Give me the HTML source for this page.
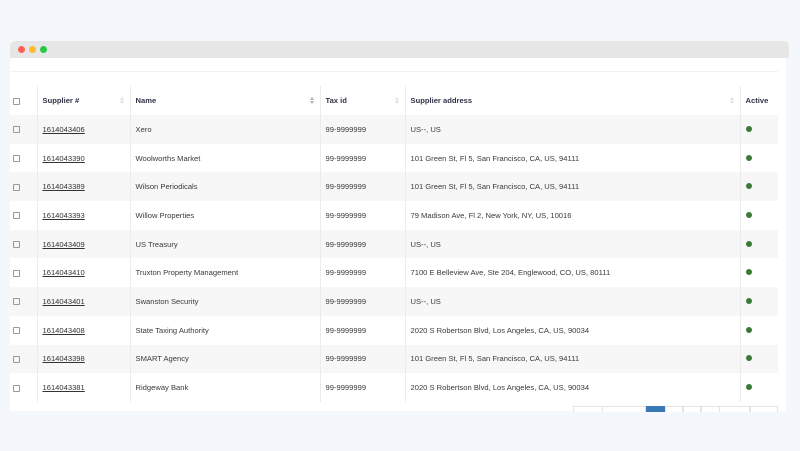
<!DOCTYPE html>
<html><head><style>
*{margin:0;padding:0;box-sizing:border-box}
body{width:800px;height:451px;background:#f4f7fc;font-family:"Liberation Sans",sans-serif;position:relative;overflow:hidden}
.win{position:absolute;left:10px;top:41px;width:779px;height:370px;background:linear-gradient(to right,#fff 776px,#f4f7fc 776px);border-radius:5px 5px 0 0;overflow:hidden}
.bar{height:17px;background:#e6e6e6;position:relative}
.dot{position:absolute;top:5px;width:7px;height:7px;border-radius:50%}
.sep{position:absolute;left:0;top:30px;width:768px;height:1px;background:#f2f2f2}
table{position:absolute;left:0;top:45px;width:768px;border-collapse:collapse;font-size:7.6px;color:#3a3a3a}
td,th{height:28.7px;padding:0 0 0 5px;text-align:left;font-weight:normal;border-left:1px solid #ececec;white-space:nowrap}
th{color:#2f3346;font-weight:bold;position:relative;height:29px}
td:first-child,th:first-child{border-left:none;padding-left:3px;width:27px}
tr.s td{background:#f7f7f7}
.cb{display:inline-block;width:7px;height:7px;border:1px solid #999;border-radius:1px;vertical-align:middle}
a{color:#333;text-decoration:underline}
.g{display:inline-block;width:6px;height:6px;border-radius:50%;background:#3b7a35}
.sort{position:absolute;right:5px;top:11px;width:5px;height:8px}
.sort:before{content:"";position:absolute;left:0;top:0;border:2.5px solid transparent;border-bottom:3px solid #ddd;border-top:0}
.sort:after{content:"";position:absolute;left:0;top:4px;border:2.5px solid transparent;border-top:3px solid #ddd;border-bottom:0}
.pg{position:absolute;top:406px;height:6px;border:1px solid #e4e4e4;border-bottom:none;background:#fff}
</style></head><body>
<div class="win">
<div class="bar"><span class="dot" style="left:8px;background:#fe5f57"></span><span class="dot" style="left:19px;background:#febc2e"></span><span class="dot" style="left:30px;background:#28c840"></span></div>
<div class="sep"></div>
<table>
<tr><th><span class="cb"></span></th><th style="width:93px">Supplier #<span class="sort"></span></th><th style="width:190px">Name<span class="sort" style="filter:brightness(.8)"></span></th><th style="width:85px">Tax id<span class="sort"></span></th><th style="width:335px">Supplier address<span class="sort"></span></th><th>Active</th></tr>
<tr class="s"><td><span class="cb"></span></td><td><a>1614043406</a></td><td>Xero</td><td>99-9999999</td><td>US--, US</td><td><span class="g"></span></td></tr>
<tr><td><span class="cb"></span></td><td><a>1614043390</a></td><td>Woolworths Market</td><td>99-9999999</td><td>101 Green St, Fl 5, San Francisco, CA, US, 94111</td><td><span class="g"></span></td></tr>
<tr class="s"><td><span class="cb"></span></td><td><a>1614043389</a></td><td>Wilson Periodicals</td><td>99-9999999</td><td>101 Green St, Fl 5, San Francisco, CA, US, 94111</td><td><span class="g"></span></td></tr>
<tr><td><span class="cb"></span></td><td><a>1614043393</a></td><td>Willow Properties</td><td>99-9999999</td><td>79 Madison Ave, Fl 2, New York, NY, US, 10016</td><td><span class="g"></span></td></tr>
<tr class="s"><td><span class="cb"></span></td><td><a>1614043409</a></td><td>US Treasury</td><td>99-9999999</td><td>US--, US</td><td><span class="g"></span></td></tr>
<tr><td><span class="cb"></span></td><td><a>1614043410</a></td><td>Truxton Property Management</td><td>99-9999999</td><td>7100 E Belleview Ave, Ste 204, Englewood, CO, US, 80111</td><td><span class="g"></span></td></tr>
<tr class="s"><td><span class="cb"></span></td><td><a>1614043401</a></td><td>Swanston Security</td><td>99-9999999</td><td>US--, US</td><td><span class="g"></span></td></tr>
<tr><td><span class="cb"></span></td><td><a>1614043408</a></td><td>State Taxing Authority</td><td>99-9999999</td><td>2020 S Robertson Blvd, Los Angeles, CA, US, 90034</td><td><span class="g"></span></td></tr>
<tr class="s"><td><span class="cb"></span></td><td><a>1614043398</a></td><td>SMART Agency</td><td>99-9999999</td><td>101 Green St, Fl 5, San Francisco, CA, US, 94111</td><td><span class="g"></span></td></tr>
<tr><td><span class="cb"></span></td><td><a>1614043381</a></td><td>Ridgeway Bank</td><td>99-9999999</td><td>2020 S Robertson Blvd, Los Angeles, CA, US, 90034</td><td><span class="g"></span></td></tr>
</table>
</div>
<div class="pg" style="left:573px;width:30px"></div>
<div class="pg" style="left:602px;width:44px"></div>
<div class="pg" style="left:646px;width:19px;background:#3a78b8;border-color:#3a78b8"></div>
<div class="pg" style="left:665px;width:18px"></div>
<div class="pg" style="left:683px;width:18px"></div>
<div class="pg" style="left:701px;width:19px"></div>
<div class="pg" style="left:719px;width:31px"></div>
<div class="pg" style="left:750px;width:28px"></div>
</body></html>
